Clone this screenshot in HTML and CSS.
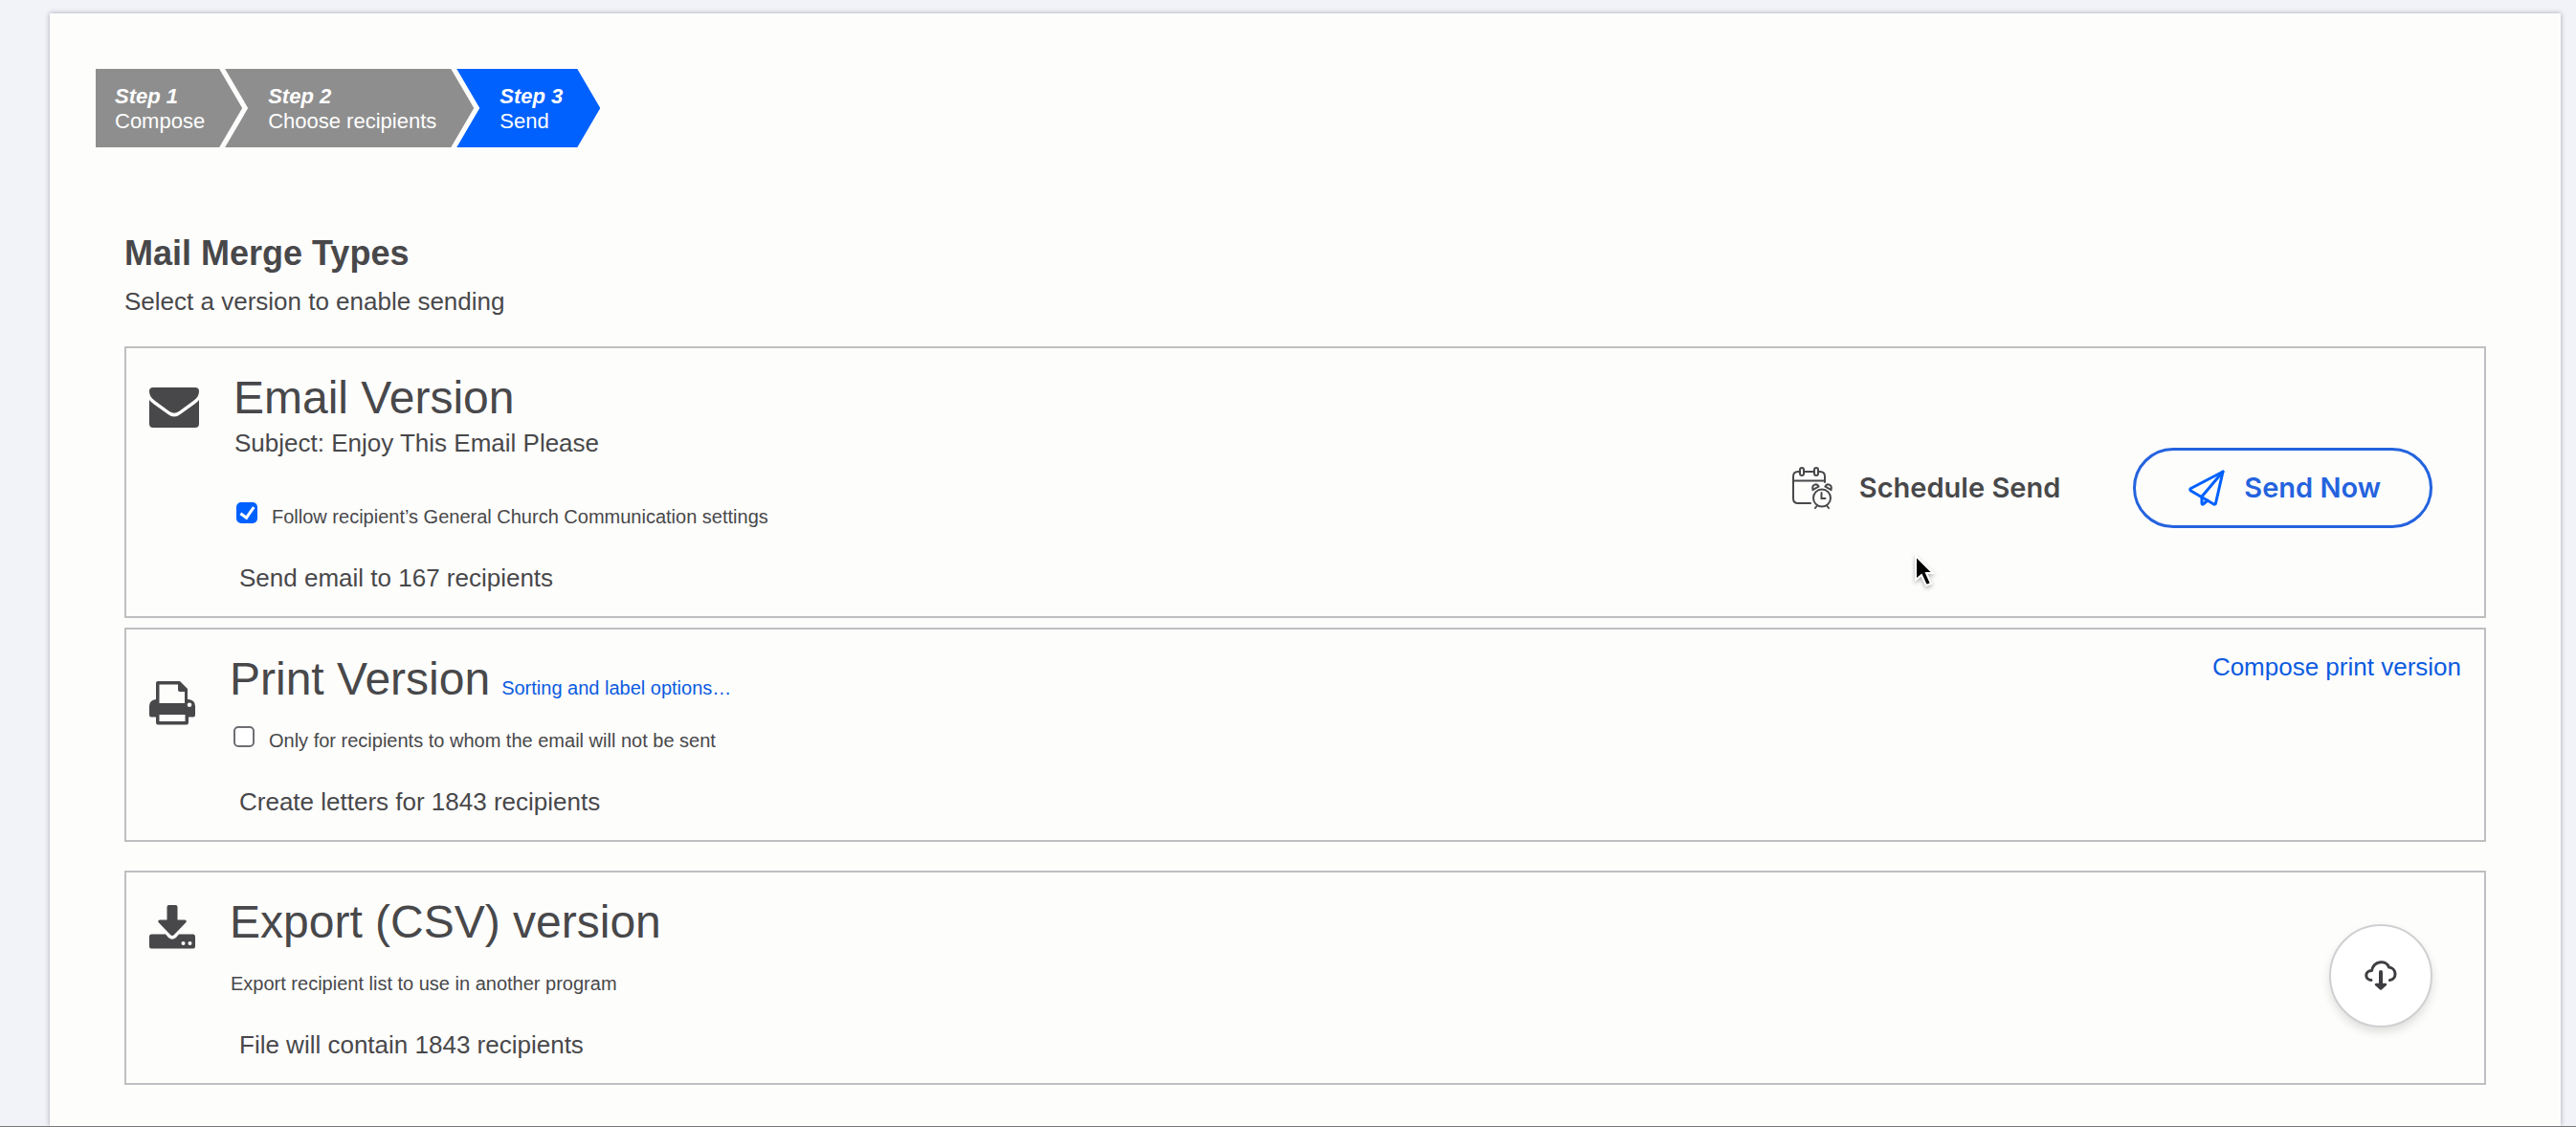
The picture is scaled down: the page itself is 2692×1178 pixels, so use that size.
FILE: index.html
```html
<!DOCTYPE html>
<html lang="en">
<head>
    <meta charset="UTF-8">
    <meta name="viewport" content="width=device-width, initial-scale=1.0">
    <title>Mail Merge - Send</title>
    <link rel="stylesheet" href="styles.css">
</head>
<body>
    <div class="page">
        <nav class="steps">
            <a class="step step-first" href="#"><b>Step 1</b>Compose</a>
            <a class="step step-second" href="#"><b>Step 2</b>Choose recipients</a>
            <a class="step step-active" href="#"><b>Step 3</b>Send</a>
        </nav>

        <main class="content">
            <h1>Mail Merge Types</h1>
            <p class="intro">Select a version to enable sending</p>

            <section class="box email-box">
                <svg class="box-icon" width="52" height="42" viewBox="0 0 52 42" fill="currentColor">
                    <path d="M4 0H48Q52 0 52 4C52 8 50 11 46 14L31 25Q26 28.500 21 25L6 14C2 11 0 8 0 4Q0 0 4 0Z"/>
                    <path d="M0 13Q2 15.500 4.500 17.300L19.500 28Q26 33 32.500 28L47.500 17.300Q50 15.500 52 13V38Q52 42 48 42H4Q0 42 0 38Z"/>
                </svg>
                <div class="box-body">
                    <h2>Email Version</h2>
                    <p class="subject">Subject: Enjoy This Email Please</p>
                    <div class="note">
                        <input type="checkbox" id="follow" checked>
                        <label for="follow">Follow recipient’s General Church Communication settings</label>
                    </div>
                    <p class="count">Send email to 167 recipients</p>
                </div>
                <div class="actions">
                    <button type="button" class="schedule-btn">
                        <svg width="42" height="44" viewBox="0 0 42 44" fill="none" stroke="currentColor" stroke-width="2" stroke-linecap="round">
                            <path d="M8 5H6Q1 5 1 10V33Q1 38 6 38H19M12 5H23M27 5H29Q34 5 34 10V16M1 14.500H34"/>
                            <rect x="8" y="1" width="4" height="8" rx="2"/>
                            <rect x="23" y="1" width="4" height="8" rx="2"/>
                            <circle cx="31" cy="32.500" r="9"/>
                            <path d="M30.500 27V33H34.500M26 40.500L24 43M36 40.500L38 43"/>
                            <path d="M21.500 24C20 18 26 17 27.500 20.500ZM40.500 24C42 18 36 17 34.500 20.500Z"/>
                        </svg>
                        Schedule Send
                    </button>
                    <button type="button" class="send-btn">
                        <svg width="38" height="38" viewBox="0 0 38 38" fill="none" stroke="currentColor" stroke-width="3" stroke-linejoin="round" stroke-linecap="round">
                            <path d="M36 2L2.500 19.500Q1 20.500 2.500 22L26.500 36Q28 36.500 28.500 35Z"/>
                            <path d="M36 2L14 28V35Q14 37 16 35.500L20 32"/>
                        </svg>
                        Send Now
                    </button>
                </div>
            </section>

            <section class="box print-box">
                <svg class="box-icon" width="48" height="46" viewBox="0 0 48 46" fill="currentColor">
                    <path fill-rule="evenodd" d="M9 0H32L40 8V19H41Q48 20 48 26V35Q48 37.500 46 37.500H41V43Q41 45.500 39 45.500H9Q7 45.500 7 43V37.500H2Q0 37.500 0 35V26Q0 20 7 19V2Q7 0 9 0ZM10.500 3.500V23H37V11H32Q30 11 30 9V3.500ZM10.500 35V42H37.500V35ZM42 22.500A2.300 2.300 0 1 0 42 27.100A2.300 2.300 0 1 0 42 22.500Z"/>
                </svg>
                <div class="box-body">
                    <div class="title-row">
                        <h2>Print Version</h2>
                        <a class="options-link" href="#">Sorting and label options…</a>
                    </div>
                    <div class="note">
                        <input type="checkbox" id="only-print">
                        <label for="only-print">Only for recipients to whom the email will not be sent</label>
                    </div>
                    <p class="count">Create letters for 1843 recipients</p>
                </div>
                <a class="compose-link" href="#">Compose print version</a>
            </section>

            <section class="box export-box">
                <svg class="box-icon" width="48" height="46" viewBox="0 0 48 46" fill="currentColor">
                    <path d="M20.500 0H27.500Q29.500 0 29.500 2V15.500H37Q40 16 38 18.500L26 31Q24 33 22 31L10 18.500Q8 16 11 15.500H18.500V2Q18.500 0 20.500 0Z"/>
                    <path fill-rule="evenodd" d="M2 30.500H17L20 34Q24 37.500 28 34L31 30.500H46Q48 30.500 48 33V43Q48 45.500 46 45.500H2Q0 45.500 0 43V33Q0 30.500 2 30.500ZM35.500 38A2 2 0 1 0 35.500 42A2 2 0 1 0 35.500 38ZM42.500 38A2 2 0 1 0 42.500 42A2 2 0 1 0 42.500 38Z"/>
                </svg>
                <div class="box-body">
                    <h2>Export (CSV) version</h2>
                    <p class="note note-text">Export recipient list to use in another program</p>
                    <p class="count">File will contain 1843 recipients</p>
                </div>
                <button type="button" class="download-btn" aria-label="Download">
                    <svg width="34" height="32" viewBox="0 0 34 32" fill="none" stroke="currentColor" stroke-width="3" stroke-linecap="round" stroke-linejoin="round">
                        <path d="M7 20.500C0 20 0 10.500 7.500 10.500C10 -.5 23 -.5 25.500 7C34 8 34 19.500 26.500 20.500"/>
                        <path d="M17 12V26" stroke-width="4"/>
                        <path d="M12 25H22L17 29.500Z" fill="currentColor" stroke-width="2.500"/>
                    </svg>
                </button>
            </section>
        </main>
    </div>

    <svg class="cursor" width="26" height="38" viewBox="0 0 26 38">
        <path d="M2 2V27L8 22L13 33L18 31L13 20H20Z" fill="#000" stroke="#fff" stroke-width="2"/>
    </svg>
</body>
</html>
```
FILE: styles.css
```css
:root {
    --text: #48484a;
    --link: #0b5be0;
    --blue: #0061ff;
    --gray: #8e8e8e;
    --border: #bfbfc1;
    --page: #fdfdfc;
}

*,
*::before {
    margin: 0;
    padding: 0;
    box-sizing: border-box;
}

body {
    font-family: "Liberation Sans", Arial, sans-serif;
    font-size: 26px;
    line-height: 32px;
    color: var(--text);
    background-color: #f2f3f8;
    min-height: 100vh;
    display: flex;
    flex-direction: column;
    padding: 14px 16px 0 52px;
    border-bottom: 1px solid #77777a;
}

a {
    color: var(--link);
    text-decoration: none;
}

.page {
    flex: 1;
    background: var(--page);
    padding: 58px 78px 43px;
    box-shadow: 0 0 5px rgba(40, 45, 70, 0.4);
    clip-path: inset(-14px -16px 0 -16px);
}

/* Step arrows */
.steps {
    display: flex;
    margin: 0 0 89px -30px;
}

.step {
    height: 82px;
    padding: 16px 39px 0 45px;
    margin-left: -18px;
    font-size: 22px;
    line-height: 26px;
    color: white;
    background: var(--gray);
    clip-path: polygon(0 0, calc(100% - 24px) 0, 100% 50%, calc(100% - 24px) 100%, 0 100%, 24px 50%);
}

.step b {
    display: block;
    font-style: italic;
}

.step-first {
    margin-left: 0;
    padding-left: 20px;
    clip-path: polygon(0 0, calc(100% - 24px) 0, 100% 50%, calc(100% - 24px) 100%, 0 100%);
}

.step-active {
    background: var(--blue);
}

h1 {
    font-size: 36px;
    line-height: 44px;
    margin-bottom: 12px;
}

.intro {
    margin-bottom: 31px;
}

/* Version boxes */
.box {
    display: flex;
    gap: 36px;
    padding: 24px;
    border: 2px solid var(--border);
}

.box-icon {
    flex: none;
}

.box-body {
    flex: 1;
}

h2 {
    font-size: 48px;
    font-weight: normal;
    line-height: 56px;
}

.title-row {
    display: flex;
    align-items: baseline;
    gap: 12px;
}

.options-link {
    font-size: 20px;
}

.note {
    display: flex;
    align-items: baseline;
    gap: 15px;
    margin: 21px 0 33px 4px;
    font-size: 20px;
    line-height: 30px;
}

.note-text {
    margin-left: 1px;
}

.note input {
    appearance: none;
    width: 22px;
    height: 22px;
    border: 2px solid #6e6e72;
    border-radius: 5px;
    background: white;
}

.note input:checked {
    border: none;
    background: var(--blue);
}

.note input:checked::before {
    content: "";
    display: block;
    width: 9px;
    height: 15px;
    margin: 2px auto 5px;
    border: solid white;
    border-width: 0 3px 3px 0;
    transform: rotate(35deg);
}

.count {
    margin-left: 10px;
}

.email-box {
    margin-bottom: 10px;
}

.email-box .box-icon {
    margin-top: 17px;
}

.email-box .note {
    margin-top: 46px;
    margin-left: 3px;
}

.email-box .count {
    margin-left: 6px;
}

.subject {
    margin: 3px 0 0 1px;
}

.print-box {
    margin-bottom: 30px;
}

.print-box .box-icon {
    margin-top: 30px;
}

.export-box .box-icon {
    margin-top: 10px;
}

/* Buttons */
button {
    font-family: Inter, "Open Sans", sans-serif;
    font-size: 29px;
    font-weight: 600;
    line-height: 36px;
    color: var(--text);
    background: transparent;
    border: none;
    cursor: pointer;
}

.actions {
    display: flex;
    align-items: center;
    gap: 76px;
    padding: 12px 30px 0 0;
}

.schedule-btn,
.send-btn {
    display: flex;
    align-items: center;
    gap: 28px;
}

.send-btn {
    gap: 20px;
    height: 84px;
    padding: 0 51px 0 55px;
    color: #2463de;
    border: 3px solid #2463de;
    border-radius: 42px;
}

.send-btn svg {
    color: var(--blue);
}

.compose-link {
    line-height: 30px;
}

.download-btn {
    display: flex;
    align-items: center;
    justify-content: center;
    align-self: center;
    width: 108px;
    height: 108px;
    margin: 0 30px 4px 0;
    color: #3d3d42;
    background: white;
    border: 2px solid #d0d0d2;
    border-radius: 50%;
    box-shadow: 0 5px 10px rgba(0, 0, 0, 0.12);
}

/* Mouse pointer floating above the page */
.cursor {
    position: absolute;
    top: 579px;
    left: 2000px;
    filter: drop-shadow(0 2px 2px rgba(0, 0, 0, 0.3));
}
```
